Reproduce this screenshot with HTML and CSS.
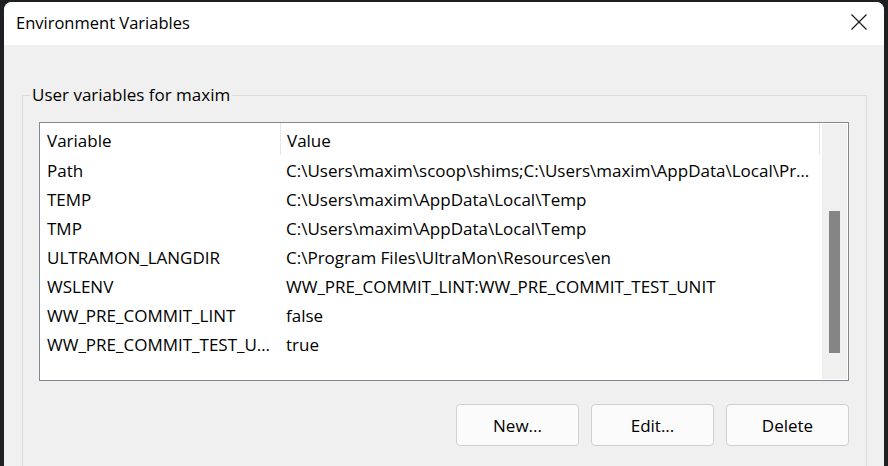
FILE: index.html
```html
<!DOCTYPE html>
<html lang="en">
  <head>
    <meta charset="UTF-8" />
    <title>Environment Variables</title>
    <link rel="stylesheet" href="styles.css">
  </head>
  <body>
    <div class="window">
      <div class="titlebar">
        <span class="title">Environment Variables</span>
        <svg class="close" width="16" height="16" viewBox="0 0 16 16">
          <path d="M0.5 0.5 L15.5 15.5 M15.5 0.5 L0.5 15.5" stroke="#1a1a1a" stroke-width="1.2" fill="none" />
        </svg>
      </div>
      <div class="content">
        <fieldset class="group">
          <legend>User variables for maxim</legend>
          <div class="listbox">
            <div class="list">
              <div class="row head">
                <div class="cell name">Variable</div>
                <div class="cell value">Value</div>
                <div class="cell rest"></div>
              </div>
              <div class="row">
                <div class="cell name">Path</div>
                <div class="cell value">C:\Users\maxim\scoop\shims;C:\Users\maxim\AppData\Local\Programs\Python\Python311\Scripts</div>
              </div>
              <div class="row">
                <div class="cell name">TEMP</div>
                <div class="cell value">C:\Users\maxim\AppData\Local\Temp</div>
              </div>
              <div class="row">
                <div class="cell name">TMP</div>
                <div class="cell value">C:\Users\maxim\AppData\Local\Temp</div>
              </div>
              <div class="row">
                <div class="cell name">ULTRAMON_LANGDIR</div>
                <div class="cell value">C:\Program Files\UltraMon\Resources\en</div>
              </div>
              <div class="row">
                <div class="cell name">WSLENV</div>
                <div class="cell value">WW_PRE_COMMIT_LINT:WW_PRE_COMMIT_TEST_UNIT</div>
              </div>
              <div class="row">
                <div class="cell name">WW_PRE_COMMIT_LINT</div>
                <div class="cell value">false</div>
              </div>
              <div class="row">
                <div class="cell name">WW_PRE_COMMIT_TEST_UNIT</div>
                <div class="cell value">true</div>
              </div>
            </div>
            <div class="scrollbar">
              <div class="thumb"></div>
            </div>
          </div>
          <div class="buttons">
            <button class="btn">New...</button>
            <button class="btn">Edit...</button>
            <button class="btn">Delete</button>
          </div>
        </fieldset>
      </div>
    </div>
  </body>
</html>
```

FILE: styles.css
```css
body {
  margin: 0;
  background: #1e1f22;
  font-family: "Open Sans", "Noto Sans", sans-serif;
  font-size: 17px;
  color: #000;
  overflow: hidden;
}
.window {
  margin: 2px 4px 0 4px;
  width: 880px;
  height: 464px;
  border-radius: 8px 8px 0 0;
  overflow: hidden;
  background: #f0f0f0;
}
.titlebar {
  height: 43px;
  background: #fff;
  display: flex;
  align-items: center;
  justify-content: space-between;
  padding: 0 17px 0 12px;
}
.title {
  font-size: 16.5px;
  margin-top: -2px;
}
.close {
  margin-top: -3px;
}
.content {
  padding: 40px 0 0 18px;
}
.group {
  margin: 0;
  min-width: 0;
  width: 810px;
  height: 400px;
  padding: 17px 17px 0 16px;
  border: 1px solid #dcdcdc;
}
.group legend {
  padding: 0 2px;
  margin-left: -9px;
  line-height: 20px;
}
.listbox {
  display: flex;
  height: 257px;
  border: 1px solid #828790;
  background: #fff;
}
.list {
  flex: 1;
  min-width: 0;
}
.row {
  display: flex;
  height: 29px;
  align-items: center;
}
.row.head {
  height: 32px;
}
.cell {
  white-space: nowrap;
  overflow: hidden;
  text-overflow: ellipsis;
  padding-top: 2px;
}
.name {
  width: 226px;
  padding-left: 7px;
  padding-right: 7px;
}
.value {
  width: 526px;
  padding-left: 6px;
  padding-right: 6px;
}
.head .cell {
  height: 100%;
  padding-top: 0;
  line-height: 35px;
  border-right: 1px solid #e5e5e5;
  box-sizing: border-box;
}
.head .name {
  width: 241px;
}
.head .value {
  width: 539px;
}
.head .rest {
  border-right: none;
  flex: 1;
}
.scrollbar {
  width: 25px;
  margin: 1px 1px 1px 0;
  background: #f0f0f0;
}
.thumb {
  width: 11px;
  height: 142px;
  margin: 87px 0 0 7px;
  background: #858585;
}
.buttons {
  display: flex;
  justify-content: flex-end;
  gap: 12px;
  margin-top: 23px;
}
.btn {
  width: 123px;
  height: 42px;
  font-family: inherit;
  font-size: 17px;
  color: #000;
  background: #fbfbfb;
  border: 1px solid #d0d0d0;
  border-radius: 4px;
  padding: 0;
}
```
